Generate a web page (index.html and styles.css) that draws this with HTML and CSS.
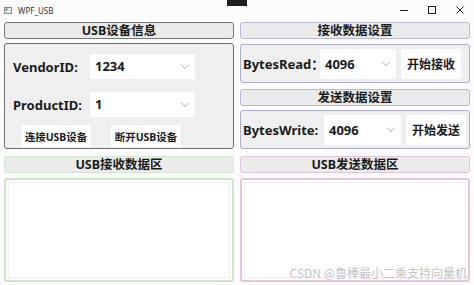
FILE: index.html
```html
<!DOCTYPE html>
<html lang="zh-CN">
<head>
  <meta charset="UTF-8">
  <title>WPF_USB</title>
  <link rel="stylesheet" href="styles.css">
</head>
<body>
  <div class="window">
    <div class="titlebar">
      <svg class="app-icon" width="8" height="7" viewBox="0 0 8 7">
        <rect x="0.5" y="0.5" width="7" height="6" fill="#e8e8e8" stroke="#8a8a8a"/>
        <rect x="1.5" y="1.5" width="2" height="2" fill="#4a9a5a"/>
      </svg>
      <span class="app-title">WPF_USB</span>
      <div class="controls">
        <svg width="8" height="8" viewBox="0 0 8 8"><path d="M0 4.5h8" stroke="#222" stroke-width="1"/></svg>
        <svg width="8" height="8" viewBox="0 0 8 8"><rect x="0.5" y="0.5" width="7" height="7" fill="none" stroke="#222"/></svg>
        <svg width="8" height="8" viewBox="0 0 8 8"><path d="M0.5 0.5l7 7M7.5 0.5l-7 7" stroke="#222" stroke-width="1"/></svg>
      </div>
      <div class="snip"></div>
    </div>

    <div class="top">
      <div class="col">
        <div class="header dark">USB设备信息</div>
        <div class="group dark device">
          <div class="row">
            <span class="label">VendorID:</span>
            <div class="combo wide">1234<span class="chev"></span></div>
          </div>
          <div class="row">
            <span class="label">ProductID:</span>
            <div class="combo wide">1<span class="chev"></span></div>
          </div>
          <div class="buttons">
            <button class="btn small">连接USB设备</button>
            <button class="btn small">断开USB设备</button>
          </div>
        </div>
      </div>

      <div class="col">
        <div class="header lav">接收数据设置</div>
        <div class="group lav setting">
          <span class="label">BytesRead：</span>
          <div class="combo">4096<span class="chev"></span></div>
          <button class="btn">开始接收</button>
        </div>
        <div class="header lav mid">发送数据设置</div>
        <div class="group lav setting write">
          <span class="label">BytesWrite:</span>
          <div class="combo">4096<span class="chev"></span></div>
          <button class="btn">开始发送</button>
        </div>
      </div>
    </div>

    <div class="bottom">
      <div class="col">
        <div class="header green">USB接收数据区</div>
        <div class="textbox green"><div class="inner"></div></div>
      </div>
      <div class="col">
        <div class="header pink">USB发送数据区</div>
        <div class="textbox pink"><div class="inner"></div></div>
      </div>
    </div>

    <div class="watermark">CSDN @鲁棒最小二乘支持向量机</div>
  </div>
</body>
</html>
```

FILE: styles.css
```css
body {
  margin: 0;
  background: #ffffff;
  font-family: "Noto Sans", "Noto Sans CJK SC", sans-serif;
  color: #1a1a1a;
}

.window {
  position: relative;
  width: 474px;
  height: 285px;
  background: #fcfcfc;
  overflow: hidden;
}

.titlebar {
  height: 20px;
  display: flex;
  align-items: center;
  padding-left: 4px;
  position: relative;
}

.app-icon {
  margin-right: 6px;
}

.app-title {
  font-size: 8px;
  color: #333;
}

.controls {
  margin-left: auto;
  display: flex;
  gap: 20px;
  padding-right: 10px;
}

.snip {
  position: absolute;
  left: 227px;
  top: 0;
  width: 20px;
  height: 6px;
  background: #1e1e1e;
}

.top, .bottom {
  display: grid;
  grid-template-columns: 230px 230px;
  column-gap: 6px;
  padding: 0 4px;
}

.top {
  margin-top: 2px;
}

.bottom {
  margin-top: 7px;
}

.col {
  display: flex;
  flex-direction: column;
}

.header {
  height: 17px;
  box-sizing: border-box;
  border: 1px solid #777;
  border-radius: 3px;
  background: #ebebeb;
  font-size: 12.5px;
  font-weight: bold;
  text-align: center;
  line-height: 15px;
}

.header.lav { border-color: #b9b9d6; }
.header.green { border-color: #d3e6cf; }
.header.pink { border-color: #e2c3da; }
.header.mid { margin-top: 6px; }

.group {
  box-sizing: border-box;
  border: 1px solid #6e6e6e;
  border-radius: 3px;
  background: #efefef;
}

.group.lav { border-color: #adadcb; }

.device {
  height: 106px;
  margin-top: 4px;
  padding: 10px 0 0 8px;
}

.row {
  display: flex;
  align-items: center;
  height: 25px;
  margin-bottom: 13px;
}

.label {
  font-size: 13px;
  font-weight: bold;
  width: 77px;
}

.combo {
  position: relative;
  background: #fff;
  height: 30px;
  box-sizing: border-box;
  padding-left: 5px;
  font-size: 13px;
  font-weight: bold;
  line-height: 30px;
}

.combo.wide {
  width: 105px;
  height: 25px;
  line-height: 25px;
}

.chev {
  position: absolute;
  right: 7px;
  top: 50%;
  width: 5px;
  height: 5px;
  margin-top: -5px;
  border-right: 1px solid #c8c8c8;
  border-bottom: 1px solid #c8c8c8;
  transform: rotate(45deg);
}

.buttons {
  display: flex;
  gap: 20px;
  margin-top: -5px;
  padding-left: 8px;
}

.btn {
  background: #fff;
  border: none;
  padding: 0;
  font-family: inherit;
  font-size: 12px;
  font-weight: bold;
  color: #1a1a1a;
}

.btn.small {
  width: 70px;
  height: 22px;
  font-size: 10.5px;
}

.setting {
  height: 39px;
  margin-top: 5px;
  display: flex;
  align-items: center;
  padding-left: 2px;
}

.setting .label {
  width: 77px;
}

.setting .combo {
  width: 76px;
}

.setting .btn {
  width: 60px;
  height: 30px;
  margin-left: 5px;
}

.write {
  margin-top: 4px;
}

.write .label {
  width: 81px;
}

.write .combo {
  width: 77px;
}

.textbox {
  height: 104px;
  margin-top: 5px;
  box-sizing: border-box;
  border: 2px solid #cfe6c9;
  border-radius: 3px;
  background: #fff;
  padding: 2px;
}

.textbox.pink { border-color: #e6c6dd; }

.inner {
  height: 100%;
  box-sizing: border-box;
  border: 1px solid #f0f0f0;
}

.watermark {
  position: absolute;
  right: 7px;
  bottom: 4px;
  font-size: 12px;
  color: #c4c4c4;
  font-family: "Noto Sans CJK SC", sans-serif;
}
```
